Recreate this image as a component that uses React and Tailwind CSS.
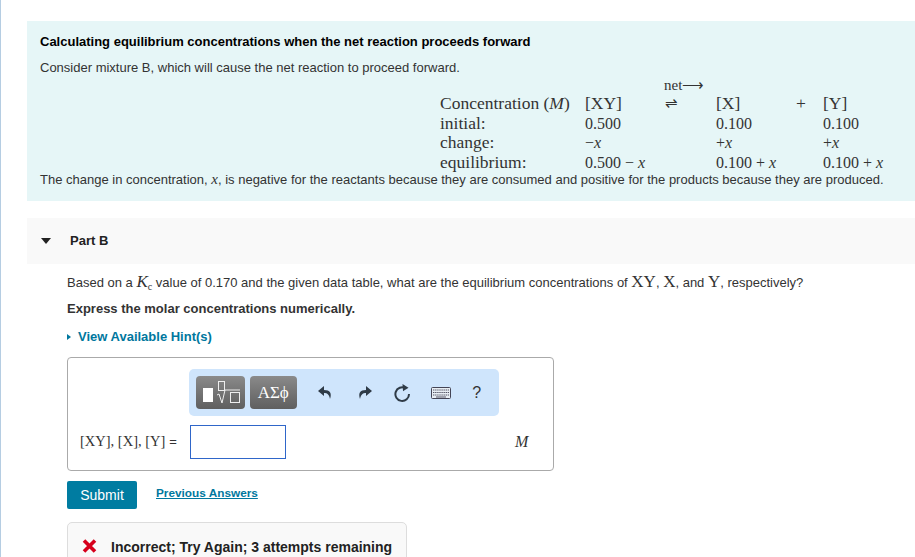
import React from 'react';

const serif = "font-['Liberation_Serif',serif]";

const Var = ({ children }) => <i className={`${serif} text-[15px] text-[#333]`}>{children}</i>;

const rows = [
  ['initial:', '0.500', '0.100', '0.100'],
  ['change:', <>−<i>x</i></>, <>+<i>x</i></>, <>+<i>x</i></>],
  ['equilibrium:', <>0.500 − <i>x</i></>, <>0.100 + <i>x</i></>, <>0.100 + <i>x</i></>],
];

const ReactionTable = () => (
  <div className={`${serif} ml-[400px] grid grid-cols-[145px_79px_52px_80px_27px_70px] text-[17.5px] leading-[19.5px] text-[#333] whitespace-nowrap`}>
    <div className="col-span-2 h-[18px]"></div>
    <div className="text-[15px] leading-[18px] h-[18px]">net⟶</div>
    <div className="col-span-3 h-[18px]"></div>
    <div>Concentration (<i>M</i>)</div>
    <div>[XY]</div>
    <div className="pl-[1px] text-[15px]">⇌</div>
    <div>[X]</div>
    <div>+</div>
    <div>[Y]</div>
    {rows.map((r) => (
      <React.Fragment key={r[0]}>
        <div>{r[0]}</div>
        <div className="text-[16px]">{r[1]}</div>
        <div></div>
        <div className="text-[16px]">{r[2]}</div>
        <div></div>
        <div className="text-[16px]">{r[3]}</div>
      </React.Fragment>
    ))}
  </div>
);

const ToolIcon = ({ children }) => (
  <div className="w-[38.5px] h-[30px] flex items-center justify-center text-[#333]">{children}</div>
);

const Toolbar = () => (
  <div className="ml-[121px] w-[310px] h-[47px] bg-[#cfe5fc] rounded-[5px] flex items-center pl-[7px]">
    <div className="w-[49px] h-[33px] rounded-[4px] bg-gradient-to-b from-[#8a8a8a] to-[#5f5f5f]">
      <svg width="49" height="33" viewBox="0 0 49 33">
        <rect x="7" y="12" width="10" height="14" fill="#fff" />
        <rect x="22.5" y="5.5" width="6" height="9" fill="none" stroke="#eee" />
        <path d="M21 19l2-1 3 9 3-13h15" fill="none" stroke="#eee" />
        <rect x="34.5" y="16.5" width="9" height="10" fill="none" stroke="#eee" />
      </svg>
    </div>
    <div className={`${serif} ml-[5px] w-[49px] h-[33px] rounded-[4px] bg-gradient-to-b from-[#8a8a8a] to-[#5f5f5f] flex items-center justify-center text-white text-[17px]`}>
      ΑΣϕ
    </div>
    <div className="ml-[10px] flex items-center">
      <ToolIcon>
        <svg width="15" height="14" viewBox="0 0 15 14"><path d="M6 0L0 5l6 5V7c3 0 5 1 6 6 2-6 0-9-6-9z" fill="#2f3b47" /></svg>
      </ToolIcon>
      <ToolIcon>
        <svg width="15" height="14" viewBox="0 0 15 14"><path d="M9 0l6 5-6 5V7C6 7 4 8 3 13 1 7 3 4 9 4z" fill="#2f3b47" /></svg>
      </ToolIcon>
      <ToolIcon>
        <svg width="17" height="18" viewBox="0 0 17 18"><path d="M11.5 4.2A6.8 6.8 0 1 0 15 10" fill="none" stroke="#2f3b47" strokeWidth="2" /><path d="M8.5 0l6 3.8-5.5 3.4z" fill="#2f3b47" /></svg>
      </ToolIcon>
      <ToolIcon>
        <svg width="20" height="12" viewBox="0 0 20 12">
          <rect x="0.5" y="0.5" width="19" height="11" rx="1" fill="#e8eef4" stroke="#445" />
          <path d="M2 3h16M2 5.5h16M2 8h16" stroke="#556" strokeWidth="1.2" strokeDasharray="1.4 0.7" />
          <path d="M5 10h10" stroke="#556" />
        </svg>
      </ToolIcon>
      <ToolIcon><span className="text-[16px] -ml-[6px]">?</span></ToolIcon>
    </div>
  </div>
);

export default function App() {
  return (
    <div className="h-[557px] w-[915px] overflow-hidden bg-white border-l-[1px] border-[#b5cde2] font-['Liberation_Sans',sans-serif] text-[13px] text-[#333] pt-[21px] pl-[26px]">
      <div className="h-[180px] bg-[#e6f6f7] px-[13px] pt-[12px]">
        <p className="font-bold text-black leading-[17px]">Calculating equilibrium concentrations when the net reaction proceeds forward</p>
        <p className="mt-[9px] leading-[17px]">Consider mixture B, which will cause the net reaction to proceed forward.</p>
        <ReactionTable />
        <p className="leading-[17px] whitespace-nowrap -mt-[1px]">
          The change in concentration, <Var>x</Var>, is negative for the reactants because they are consumed and positive for the products because they are produced.
        </p>
      </div>

      <div className="mt-[17px] h-[46px] bg-[#f9f9f9] flex items-center">
        <div className="ml-[14px] w-0 h-0 border-x-[5px] border-x-transparent border-t-[6px] border-t-[#222]"></div>
        <span className="ml-[19px] font-bold text-[#222]">Part B</span>
      </div>

      <div className="pl-[40px]">
        <p className="mt-[9px] leading-[17px] whitespace-nowrap">
          Based on a <i className={`${serif} text-[17px]`}>K</i><sub className={`${serif} text-[10px]`}>c</sub> value of 0.170 and the given data table, what are the equilibrium concentrations of <span className={`${serif} text-[17px]`}>XY</span>, <span className={`${serif} text-[17px]`}>X</span>, and <span className={`${serif} text-[17px]`}>Y</span>, respectively?
        </p>
        <p className="mt-[9px] font-bold leading-[17px]">Express the molar concentrations numerically.</p>
        <p className="mt-[11px] font-bold leading-[17px] text-[#00779e] flex items-center">
          <span className="w-0 h-0 border-y-[3px] border-y-transparent border-l-[4px] border-l-[#00779e] mr-[7px]"></span>
          View Available Hint(s)
        </p>

        <div className="mt-[12px] w-[487px] h-[114px] border border-[#aaa] rounded-[4px] pt-[11px]">
          <Toolbar />
          <div className="mt-[9px] flex items-center h-[34px] pl-[12px]">
            <span className={`${serif} text-[14.5px] text-[#333]`}>[XY], [X], [Y]</span>
            <span className="ml-[4px]">=</span>
            <div className="ml-[13px] w-[96px] h-[34px] border border-[#2f66c9]"></div>
            <i className={`${serif} ml-[229px] text-[16px]`}>M</i>
          </div>
        </div>

        <div className="mt-[10px] flex items-center">
          <button className="w-[70px] h-[28px] bg-[#007ca1] rounded-[2px] text-white text-[14px]">Submit</button>
          <a className="ml-[19px] -mt-[2px] font-bold underline text-[#00779e] text-[11.8px]">Previous Answers</a>
        </div>

        <div className="mt-[13px] w-[340px] h-[60px] border border-[#ddd] rounded-[5px] bg-[#f9f9f9] pl-[14px] pt-[14px] flex items-start">
          <svg width="15" height="14" viewBox="0 0 15 14" className="mt-[2px]">
            <path d="M2 1.5L13 12.5M13 1.5L2 12.5" stroke="#d6001c" strokeWidth="3.6" />
          </svg>
          <span className="ml-[14px] font-bold text-[#222] text-[14px] leading-[20px]">Incorrect; Try Again; 3 attempts remaining</span>
        </div>
      </div>
    </div>
  );
}
